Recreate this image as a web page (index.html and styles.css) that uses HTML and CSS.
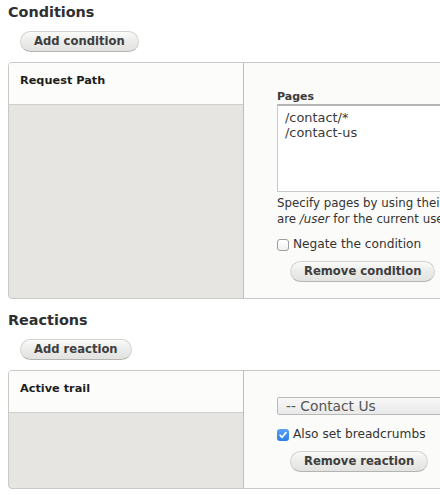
FILE: index.html
```html
<!DOCTYPE html>
<html lang="en">
<head>
<meta charset="utf-8">
<title>Context</title>
<link rel="stylesheet" href="styles.css">
</head>
<body>
<div class="page">
  <section class="group first">
    <h2 class="group-title">Conditions</h2>
    <button class="btn add-btn" type="button">Add condition</button>
    <div class="vtabs">
      <ul class="vtabs-list">
        <li class="vtab selected"><strong>Request Path</strong></li>
      </ul>
      <div class="vtabs-pane">
        <label class="field-label" for="pages">Pages</label>
        <textarea id="pages" class="pages-input" rows="5">/contact/*
/contact-us</textarea>
        <div class="description">Specify pages by using their paths. Enter one path per line. The '*' character is a wildcard. Example paths<br>are <em>/user</em> for the current user's page and <em>/user/*</em> for every user page.</div>
        <div class="check-row">
          <span class="checkbox"></span>
          <span class="check-label">Negate the condition</span>
        </div>
        <button class="btn remove-btn" type="button">Remove condition</button>
      </div>
    </div>
  </section>
  <section class="group">
    <h2 class="group-title">Reactions</h2>
    <button class="btn add-btn" type="button">Add reaction</button>
    <div class="vtabs">
      <ul class="vtabs-list">
        <li class="vtab selected"><strong>Active trail</strong></li>
      </ul>
      <div class="vtabs-pane">
        <div class="select">-- Contact Us</div>
        <div class="check-row second">
          <span class="checkbox checked"><svg viewBox="0 0 12 12" width="12" height="12"><path d="M3.2 6.3 L5.1 8.3 L8.9 3.6" fill="none" stroke="#fff" stroke-width="1.7" stroke-linecap="round" stroke-linejoin="round"/></svg></span>
          <span class="check-label">Also set breadcrumbs</span>
        </div>
        <button class="btn remove-btn" type="button">Remove reaction</button>
      </div>
    </div>
  </section>
</div>
</body>
</html>
```

FILE: styles.css
```css
html, body {
  margin: 0;
  padding: 0;
  overflow: hidden;
  background: #fff;
}
body {
  font-family: "DejaVu Sans", "Liberation Sans", sans-serif;
  color: #333;
}
.page {
  width: 620px;
  padding: 2px 0 0 8px;
}
.group.first .group-title { margin-top: 0; }
.group-title {
  margin: 11px 0 9px 0;
  font-size: 14.4px;
  line-height: 20px;
  font-weight: bold;
  color: #2f2f31;
}
.btn {
  display: block;
  height: 21px;
  box-sizing: border-box;
  margin: 0 0 0 12px;
  padding: 0 13px;
  border: 1px solid #d2d2d0;
  border-bottom-color: #b4b4b2;
  border-radius: 11px;
  background: linear-gradient(to bottom, #fbfbfa 0%, #ececea 45%, #e2e2e0 100%);
  font-family: "DejaVu Sans", "Liberation Sans", sans-serif;
  font-size: 11.6px;
  font-weight: bold;
  line-height: 19px;
  color: #3e3e3e;
}
.vtabs {
  display: flex;
  margin-top: 10px;
  border: 1px solid #c9c9c7;
  border-radius: 4px;
  overflow: hidden;
  background: #e6e5e1;
}
.vtabs-list {
  list-style: none;
  margin: 0;
  padding: 0;
  width: 234px;
  flex: none;
}
.vtab {
  box-sizing: content-box;
  padding: 10px 11px 0 11px;
  height: 31px;
  border-bottom: 1px solid #cfcfcd;
  background: #fcfcfa;
  font-size: 11.3px;
  line-height: 16px;
  color: #1e1e20;
}
.vtabs-pane {
  flex: 1;
  border-left: 1px solid #bdbdbb;
  background: #fbfbf9;
  padding: 26px 0 16px 33px;
  display: flex;
  flex-direction: column;
  align-items: flex-start;
}
.field-label {
  display: block;
  font-size: 11px;
  line-height: 15px;
  font-weight: bold;
  color: #3a3a3a;
}
.pages-input {
  display: block;
  width: 260px;
  height: 88px;
  box-sizing: border-box;
  margin: 0;
  padding: 5px 7px;
  border: 1px solid #c8c8c8;
  border-top: 2px solid #b5b5b5;
  background: #fff;
  font-family: "DejaVu Sans", "Liberation Sans", sans-serif;
  font-size: 12.9px;
  line-height: 14.5px;
  color: #3a3a3a;
  resize: none;
  outline: none;
}
.description {
  margin-top: 4px;
  font-size: 11.8px;
  line-height: 15.5px;
  color: #333;
  white-space: nowrap;
}
.description em { font-style: italic; }
.check-row {
  display: flex;
  align-items: center;
  gap: 4px;
  margin-top: 9px;
  height: 16px;
}
.check-row.second { margin-top: 11px; }
.checkbox {
  width: 12px;
  height: 12px;
  box-sizing: border-box;
  margin-top: 2px;
  border: 1px solid #9e9e9e;
  border-radius: 3px;
  background: linear-gradient(to bottom, #fff, #f1f1f1);
  display: flex;
  align-items: center;
  justify-content: center;
}
.checkbox.checked {
  border: none;
  background: linear-gradient(to bottom, #5aa2f5, #2a7fe6);
}
.checkbox svg { display: block; }
.check-label {
  font-size: 12.2px;
  line-height: 16px;
  color: #333;
  white-space: nowrap;
}
.remove-btn {
  margin-top: 9px;
  margin-left: 13px;
}
.select {
  width: 260px;
  height: 18px;
  box-sizing: border-box;
  border: 1px solid #b9b9b9;
  border-radius: 2px;
  background: linear-gradient(to bottom, #f8f8f8, #e9e9e9);
  padding: 0 8px;
  font-size: 13.8px;
  line-height: 16px;
  color: #555;
  white-space: nowrap;
}
```
